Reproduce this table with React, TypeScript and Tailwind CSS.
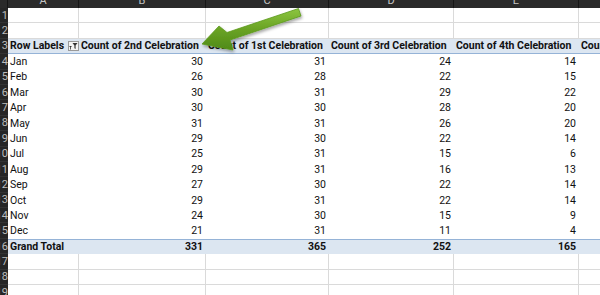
import React from "react";

const font = { fontFamily: '"Liberation Sans Narrow", Roboto, "Liberation Sans", sans-serif' };

const colWidths = ["w-[71px]", "w-[127px]", "w-[123px]", "w-[125px]", "w-[125px]", "w-[125px]"];
const letters = ["A", "B", "C", "D", "E", "F"];

const headers = [
  "Count of 2nd Celebration",
  "Count of 1st Celebration",
  "Count of 3rd Celebration",
  "Count of 4th Celebration",
  "Count of 5th Celebration",
];

const data: [string, number, number, number, number][] = [
  ["Jan", 30, 31, 24, 14],
  ["Feb", 26, 28, 22, 15],
  ["Mar", 30, 31, 29, 22],
  ["Apr", 30, 30, 28, 20],
  ["May", 31, 31, 26, 20],
  ["Jun", 29, 30, 22, 14],
  ["Jul", 25, 31, 15, 6],
  ["Aug", 29, 31, 16, 13],
  ["Sep", 27, 30, 22, 14],
  ["Oct", 29, 31, 22, 14],
  ["Nov", 24, 30, 15, 9],
  ["Dec", 21, 31, 11, 4],
];

function RowNum({ n }: { n: number }) {
  return (
    <div className="w-[8px] shrink-0 h-full bg-[#262626] border-b border-[#333] overflow-hidden flex items-center justify-end">
      <span className="text-[11px] leading-none text-[#bdbdbd] whitespace-nowrap">{n}</span>
    </div>
  );
}

function EmptyRow({ n }: { n: number }) {
  return (
    <div className="flex h-[15.4px] shrink-0">
      <RowNum n={n} />
      {colWidths.map((w, i) => (
        <div key={i} className={`${w} shrink-0 h-full border-r border-b border-[#dadada]`} />
      ))}
    </div>
  );
}

function FilterButton() {
  return (
    <div className="w-[11px] h-[10px] border border-[#9a9a9a] bg-[#f4f4f4] flex items-center justify-center shrink-0">
      <svg width="9" height="8" viewBox="0 0 9 8">
        <path d="M0.5 4.5h2" stroke="#333" strokeWidth="1" />
        <path d="M1.5 5v2.5" stroke="#333" strokeWidth="0.8" />
        <path d="M3.5 1h5L6.6 3.6V7L5.4 6.2V3.6Z" fill="#333" />
      </svg>
    </div>
  );
}

export default function App() {
  return (
    <div className="relative w-[600px] h-[295px] overflow-hidden bg-white text-[#111]" style={font}>
      {/* column headers */}
      <div className="flex h-[8px] bg-[#2a2a2a]">
        <div className="w-[8px] shrink-0 border-r border-[#151515]" />
        {colWidths.map((w, i) => (
          <div key={i} className={`${w} shrink-0 h-full border-r border-[#151515] overflow-hidden flex items-end justify-center`}>
            <span className="text-[11px] leading-[11px] text-[#c4c4c4] translate-y-[-2px]">{letters[i]}</span>
          </div>
        ))}
      </div>

      <EmptyRow n={1} />
      <EmptyRow n={2} />

      {/* pivot header */}
      <div className="flex h-[15.4px] shrink-0">
        <RowNum n={3} />
        <div className="flex flex-1 h-full bg-[#dce6f1] border-b border-[#95b3d7] text-[10.5px] font-bold whitespace-nowrap">
          <div className="w-[71px] shrink-0 flex items-center pl-[2px] gap-[4px]">
            <span>Row Labels</span>
            <FilterButton />
          </div>
          {headers.map((h, i) => (
            <div key={h} className={`${colWidths[i + 1]} shrink-0 flex items-center pl-[2px] overflow-hidden`}>
              {h}
            </div>
          ))}
        </div>
      </div>

      {data.map((r, idx) => (
        <div key={r[0]} className="flex h-[15.4px] shrink-0 text-[10.5px]">
          <RowNum n={idx + 4} />
          <div className="w-[71px] shrink-0 flex items-center pl-[2px]">{r[0]}</div>
          {r.slice(1).map((v, i) => (
            <div key={i} className={`${colWidths[i + 1]} shrink-0 flex items-center justify-end pr-[3px]`}>
              {v}
            </div>
          ))}
          <div className="flex-1" />
        </div>
      ))}

      {/* grand total */}
      <div className="flex h-[15.4px] shrink-0">
        <RowNum n={16} />
        <div className="flex flex-1 h-full bg-[#dce6f1] border-t border-[#95b3d7] text-[10.5px] font-bold">
          <div className="w-[71px] shrink-0 flex items-center pl-[2px] whitespace-nowrap">Grand Total</div>
          {[331, 365, 252, 165].map((v, i) => (
            <div key={i} className={`${colWidths[i + 1]} shrink-0 flex items-center justify-end pr-[3px]`}>
              {v}
            </div>
          ))}
          <div className="flex-1" />
        </div>
      </div>

      <EmptyRow n={17} />
      <EmptyRow n={18} />
      <EmptyRow n={19} />

      {/* callout arrow */}
      <svg className="absolute left-0 top-0 pointer-events-none" width="600" height="295" viewBox="0 0 600 295">
        <defs>
          <linearGradient id="g" x1="0" y1="0" x2="0" y2="1">
            <stop offset="0" stopColor="#8cc540" />
            <stop offset="0.5" stopColor="#6aa324" />
            <stop offset="1" stopColor="#4f8a17" />
          </linearGradient>
          <filter id="sh" x="-20%" y="-40%" width="140%" height="180%">
            <feDropShadow dx="1" dy="2" stdDeviation="1.5" floodColor="#000" floodOpacity="0.35" />
          </filter>
        </defs>
        <polygon
          points="202,44 219,26 227,32.5 298.5,8.5 301,16 230,40 233,50"
          fill="url(#g)"
          stroke="#5c9a1c"
          strokeWidth="0.8"
          strokeLinejoin="round"
          filter="url(#sh)"
        />
      </svg>
    </div>
  );
}
